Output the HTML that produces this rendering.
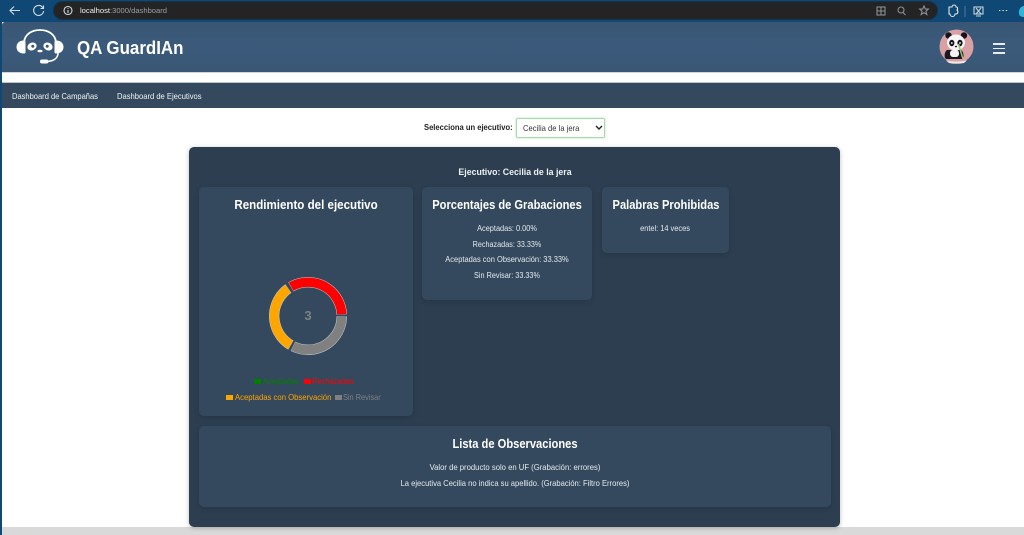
<!DOCTYPE html>
<html><head><meta charset="utf-8"><title>QA GuardIAn</title>
<style>
html,body{margin:0;padding:0;width:1024px;height:535px;overflow:hidden;background:#fff;font-family:"Liberation Sans",sans-serif}
.a{position:absolute}
.l{position:absolute;white-space:nowrap;transform-origin:0 50%}
.t{position:absolute;white-space:nowrap;color:#e6eaee;font-size:8.6px;line-height:12px}
.h{position:absolute;white-space:nowrap;color:#fff;font-size:13.2px;font-weight:bold;line-height:16px}
.card{position:absolute;background:#34495e;border-radius:5px;box-shadow:0 2px 6px rgba(0,0,0,.12)}
</style></head><body>
<div class="a" style="left:0;top:0;width:1024px;height:22px;background:#0f4874"></div>
<div class="a" style="left:0;top:22px;width:2px;height:513px;background:#0f4874"></div>
<div class="a" style="left:54px;top:2px;width:883px;height:17px;border-radius:9px;background:#242424;box-shadow:0 0 0 1px #15334a"></div>
<svg class="a" style="left:0;top:0" width="1024" height="22" fill="none" stroke="#d5dde3" stroke-width="1.1">
<path d="M20 10.5H10M14 6.5l-4 4 4 4"/>
<path d="M43 8a5 5 0 1 0 .6 3M43.500 5.500V8.500H40.500"/>
<circle cx="68" cy="10.500" r="4"/><path d="M68 10v3M68 8v.8"/>
<g stroke="#8b8f92"><rect x="877" y="7" width="8" height="8"/><path d="M881 7v8M877 11h8"/><circle cx="901" cy="10" r="3"/><path d="M903 12.500l2.500 2.500"/><path d="M924 6l1.300 3h3l-2.400 2.200.9 3.300-2.800-1.800-2.800 1.800.9-3.300-2.400-2.200h3z"/></g>
<path d="M949 7h3a2 2 0 0 1 4 0c2 0 2 2 1 3 1.500 1 1 4-1 4h-1a2.500 2.500 0 0 1-5 0h-1z" stroke="#dfe6ea"/>
<path d="M965 6v11" stroke="#4d7596"/>
<rect x="974" y="7" width="9" height="7" stroke="#c6d2da"/><path d="M976 8l5 6M981 8l-5 6M976 16h5" stroke="#c6d2da"/>
<path d="M999 10.500h1.400M1002.400 10.500h1.400M1005.800 10.500h1.400" stroke="#dfe6ea"/>
<path d="M1019 13a6 6 0 0 1 5-7v11c-3 0-5-1-5-4z" fill="#2fb5d8" stroke="none"/>
</svg>
<div class="a" style="left:80px;top:5px;font-size:7.6px;line-height:12px;color:#9aa0a4;white-space:nowrap"><span style="color:#eceff1">localhost</span>:3000/dashboard</div>

<div class="a" style="left:2px;top:22px;width:1022px;height:50px;background:linear-gradient(#3a5674,#3b5a7b 50%,#3a5675);border-radius:3px 0 0 0"></div>
<div class="a" style="left:2px;top:72px;width:1022px;height:1px;background:#cfd5da"></div>
<div class="a" style="left:2px;top:82px;width:1022px;height:1px;background:#bcc3c9"></div>
<svg class="a" style="left:14px;top:27px" width="52" height="40" viewBox="0 0 52 40" fill="#fff">
<path d="M10 15C11 7 18 3 26 3s15 4 16 12" fill="none" stroke="#fff" stroke-width="1.800"/>
<path d="M10 13.500c-5 0-7.500 3-7.500 6.500s2.500 6.500 7.500 6.500c1 0 1.500-.5 1.500-1.500V15c0-1-.5-1.500-1.500-1.500z"/>
<path d="M42 13.500c5 0 7.500 3 7.500 6.500s-2.500 6.500-7.500 6.500c-1 0-1.500-.5-1.500-1.500V15c0-1 .5-1.500 1.500-1.500z"/>
<path d="M44 26c0 5-4 8-11 8.500" fill="none" stroke="#fff" stroke-width="1.600"/>
<ellipse cx="18" cy="19.500" rx="4.800" ry="3.800" transform="rotate(-25 18 19.500)"/>
<ellipse cx="34" cy="19.500" rx="4.800" ry="3.800" transform="rotate(25 34 19.500)"/>
<circle cx="18.800" cy="19.300" r="1.500" fill="#3a5674"/><circle cx="33.200" cy="19.300" r="1.500" fill="#3a5674"/>
<ellipse cx="26" cy="24" rx="2.600" ry="1.300"/>
<rect x="26" y="32.500" width="8.500" height="4" rx="2"/>
</svg>
<div class="l" style="left:77px;top:37px;color:#fff;font-size:18.500px;font-weight:bold;line-height:22px;transform:scaleX(.914)">QA GuardIAn</div>
<svg class="a" style="left:939px;top:29px" width="35" height="35" viewBox="0 0 35 35">
<circle cx="17.500" cy="17.500" r="17" fill="#d9a1a3"/>
<path d="M7 31.500q10 2 21 0l-3 2.500q-8 1.500-15 0z" fill="#f2e5e3"/>
<circle cx="9.500" cy="6.500" r="3.200" fill="#15121c"/><circle cx="25" cy="6.500" r="3.200" fill="#15121c"/>
<path d="M8 21c-3 2-3 8-1 9h16c3-2 1-8-1-9z" fill="#1a1722"/>
<rect x="11" y="21" width="9" height="7" rx="3" fill="#f3f1f2"/>
<ellipse cx="17" cy="13.500" rx="9" ry="8" fill="#f7f6f7"/>
<ellipse cx="12.800" cy="14" rx="2.600" ry="3.200" fill="#15121c"/><ellipse cx="21" cy="14" rx="2.600" ry="3.200" fill="#15121c"/>
<circle cx="12.800" cy="14" r="1" fill="#cfcfd6"/><circle cx="21" cy="14" r="1" fill="#cfcfd6"/>
<ellipse cx="17" cy="17.500" rx="1.200" ry=".8" fill="#15121c"/>
<path d="M19.500 15l4.500 15" stroke="#9bc07c" stroke-width="1.500"/>
</svg>
<div class="a" style="left:993px;top:43px;width:12px;height:1.500px;background:#e8ecef"></div>
<div class="a" style="left:993px;top:47.500px;width:12px;height:1.500px;background:#e8ecef"></div>
<div class="a" style="left:993px;top:52px;width:12px;height:1.500px;background:#e8ecef"></div>

<div class="a" style="left:2px;top:83px;width:1022px;height:25px;background:#34495e"></div>
<div class="l" style="left:12px;top:90px;color:#f0f3f5;font-size:8.500px;line-height:12px;transform:scaleX(.887)">Dashboard de Campañas</div>
<div class="l" style="left:117px;top:90px;color:#f0f3f5;font-size:8.500px;line-height:12px;transform:scaleX(.895)">Dashboard de Ejecutivos</div>

<div class="l" style="left:424px;top:122px;color:#222;font-size:8px;font-weight:bold;line-height:12px;transform:scaleX(.95)">Selecciona un ejecutivo:</div>
<div class="a" style="left:516px;top:118px;width:87px;height:18px;border:1px solid #a6dba8;border-radius:2px;box-shadow:0 0 2px #b7e3b8;background:#fff"><span class="l" style="left:6px;top:0;color:#333;font-size:8.300px;line-height:18px;transform:scaleX(.92)">Cecilia de la jera</span>
<svg class="a" style="left:78px;top:6px" width="8" height="6" fill="none" stroke="#222" stroke-width="1.400"><path d="M1 1l3 3 3-3"/></svg></div>

<div class="a" style="left:0;top:527px;width:1024px;height:8px;background:#d9d9d9"></div>
<div class="a" style="left:0;top:527px;width:2px;height:8px;background:#0f4874"></div>
<div class="a" style="left:189px;top:147px;width:651px;height:380px;background:#2c3e50;border-radius:5px;box-shadow:0 1px 5px rgba(0,0,0,.25)"></div>
<div class="t" style="left:514.500px;top:166px;font-weight:bold;font-size:9.200px;color:#eef1f4;transform:translateX(-50%) scaleX(.955)">Ejecutivo: Cecilia de la jera</div>

<div class="card" style="left:199px;top:187px;width:214px;height:229px"></div>
<div class="card" style="left:422px;top:187px;width:170px;height:113px"></div>
<div class="card" style="left:602px;top:187px;width:127px;height:66px"></div>
<div class="card" style="left:199px;top:426px;width:632px;height:81px"></div>

<div class="h" style="left:305.500px;top:197px;transform:translateX(-50%) scaleX(.877)">Rendimiento del ejecutivo</div>
<div class="h" style="left:507px;top:197px;transform:translateX(-50%) scaleX(.843)">Porcentajes de Grabaciones</div>
<div class="h" style="left:665.500px;top:197px;transform:translateX(-50%) scaleX(.843)">Palabras Prohibidas</div>
<div class="h" style="left:514.500px;top:436px;transform:translateX(-50%) scaleX(.845)">Lista de Observaciones</div>

<div class="t" style="left:507px;top:222px;transform:translateX(-50%) scaleX(.857)">Aceptadas: 0.00%</div>
<div class="t" style="left:507px;top:238px;transform:translateX(-50%) scaleX(.84)">Rechazadas: 33.33%</div>
<div class="t" style="left:507px;top:253px;transform:translateX(-50%) scaleX(.873)">Aceptadas con Observación: 33.33%</div>
<div class="t" style="left:507px;top:269px;transform:translateX(-50%) scaleX(.846)">Sin Revisar: 33.33%</div>
<div class="t" style="left:665px;top:222px;transform:translateX(-50%) scaleX(.862)">entel: 14 veces</div>
<div class="t" style="left:514.500px;top:461px;transform:translateX(-50%) scaleX(.895)">Valor de producto solo en UF (Grabación: errores)</div>
<div class="t" style="left:514.500px;top:477px;transform:translateX(-50%) scaleX(.884)">La ejecutiva Cecilia no indica su apellido. (Grabación: Filtro Errores)</div>

<svg class="a" style="left:258px;top:266px" width="100" height="100" viewBox="258 266 100 100" fill="none">
<g stroke-width="10.400">
<circle cx="308" cy="316" r="33.800" pathLength="360" stroke="#c9ced3" stroke-dasharray="118 242" transform="rotate(-120.500 308 316)"/>
<circle cx="308" cy="316" r="33.800" pathLength="360" stroke="#c9ced3" stroke-dasharray="116 244" transform="rotate(0.500 308 316)"/>
<circle cx="308" cy="316" r="33.800" pathLength="360" stroke="#c9ced3" stroke-dasharray="114 246" transform="rotate(120.500 308 316)"/>
</g>
<g stroke-width="9.400">
<circle cx="308" cy="316" r="33.800" pathLength="360" stroke="#ff0000" stroke-dasharray="117 243" transform="rotate(-120 308 316)"/>
<circle cx="308" cy="316" r="33.800" pathLength="360" stroke="#808080" stroke-dasharray="115 245" transform="rotate(1 308 316)"/>
<circle cx="308" cy="316" r="33.800" pathLength="360" stroke="#ffa500" stroke-dasharray="113 247" transform="rotate(121 308 316)"/>
</g>
</svg>
<div class="t" style="left:308px;top:309px;font-size:13px;font-weight:bold;line-height:14px;color:#808080;transform:translateX(-50%)">3</div>

<div class="a" style="left:254px;top:379px;width:7px;height:5px;background:#008000"></div>
<div class="l" style="left:263px;top:375px;font-size:8.400px;line-height:12px;color:#008000;transform:scaleX(.9)">Aceptadas</div>
<div class="a" style="left:304px;top:379px;width:7px;height:5px;background:#ff0000"></div>
<div class="l" style="left:312px;top:375px;font-size:8.400px;line-height:12px;color:#ff0000;transform:scaleX(.9)">Rechazadas</div>
<div class="a" style="left:226px;top:395px;width:7px;height:5px;background:#ffa500"></div>
<div class="l" style="left:235px;top:391px;font-size:8.400px;line-height:12px;color:#ffa500;transform:scaleX(.92)">Aceptadas con Observación</div>
<div class="a" style="left:335px;top:395px;width:7px;height:5px;background:#808080"></div>
<div class="l" style="left:343px;top:391px;font-size:8.400px;line-height:12px;color:#808080;transform:scaleX(.88)">Sin Revisar</div>
</body></html>
